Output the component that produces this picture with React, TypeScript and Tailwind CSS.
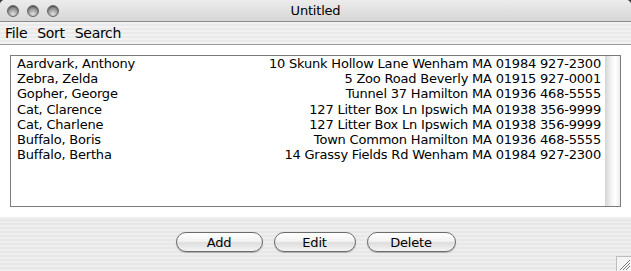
import React from 'react';

const rows = [
  ['Aardvark, Anthony', '10 Skunk Hollow Lane Wenham MA 01984 927-2300'],
  ['Zebra, Zelda', '5 Zoo Road Beverly MA 01915 927-0001'],
  ['Gopher, George', 'Tunnel 37 Hamilton MA 01936 468-5555'],
  ['Cat, Clarence', '127 Litter Box Ln Ipswich MA 01938 356-9999'],
  ['Cat, Charlene', '127 Litter Box Ln Ipswich MA 01938 356-9999'],
  ['Buffalo, Boris', 'Town Common Hamilton MA 01936 468-5555'],
  ['Buffalo, Bertha', '14 Grassy Fields Rd Wenham MA 01984 927-2300'],
];

function Light() {
  return (
    <span className="w-[12px] h-[12px] rounded-full border border-[#666666] bg-[radial-gradient(circle_at_50%_80%,#e2e2e2_0%,#a2a2a2_45%,#606060_100%)] shadow-[inset_0_1px_1px_rgba(0,0,0,0.35)]" />
  );
}

function AquaButton({ label, width }: { label: string; width: string }) {
  return (
    <button
      className={`${width} h-[20px] rounded-full border border-[#6b6b6b] bg-[linear-gradient(#ffffff_0%,#f3f3f3_45%,#dedede_55%,#f4f4f4_100%)] shadow-[0_1px_1px_rgba(0,0,0,0.25)] text-[13px] leading-none tracking-[-0.2px] text-black`}
    >
      {label}
    </button>
  );
}

export default function App() {
  return (
    <div className="w-[631px] h-[271px] bg-[#3a3a3a] font-['DejaVu_Sans',sans-serif] overflow-hidden">
      <div className="flex flex-col h-full rounded-t-[5px] overflow-hidden bg-white">
        {/* title bar */}
        <div className="relative h-[22px] flex items-center border-b border-[#8c8c8c] bg-[linear-gradient(#ececec,#d6d6d6)]">
          <div className="flex gap-[8px] pl-[7px]">
            <Light />
            <Light />
            <Light />
          </div>
          <div className="absolute inset-0 flex items-center justify-center text-[13px] tracking-[-0.2px] text-black">
            Untitled
          </div>
        </div>

        {/* menu bar */}
        <div className="h-[23px] flex items-center gap-[10px] pl-[5px] border-b border-[#9a9a9a] text-[14px] tracking-[-0.3px] text-black bg-[repeating-linear-gradient(#f2f2f2_0px,#f2f2f2_2px,#eaeaea_2px,#eaeaea_4px)]">
          <span>File</span>
          <span>Sort</span>
          <span>Search</span>
        </div>

        {/* content */}
        <div className="h-[172px] pt-[10px] px-[10px]">
          <div className="h-[152px] flex border border-[#7b7b7b] bg-white">
            <div className="flex-1 pl-[6px] pr-[4px] text-[13px] leading-[15.2px] tracking-[-0.2px] text-black">
              {rows.map(([name, addr]) => (
                <div key={name + addr} className="flex justify-between whitespace-nowrap">
                  <span>{name}</span>
                  <span>{addr}</span>
                </div>
              ))}
            </div>
            <div className="w-[15px] bg-[linear-gradient(90deg,#d4d4d4_0%,#f6f6f6_45%,#ffffff_70%,#ececec_100%)]" />
          </div>
        </div>

        {/* button bar */}
        <div className="relative flex-1 flex justify-center gap-[11px] pt-[15px] bg-[repeating-linear-gradient(#eeeeee_0px,#eeeeee_2px,#e7e7e7_2px,#e7e7e7_4px)]">
          <AquaButton label="Add" width="w-[87px]" />
          <AquaButton label="Edit" width="w-[82px]" />
          <AquaButton label="Delete" width="w-[89px]" />
          <svg className="absolute right-0 bottom-0" width="15" height="15" viewBox="0 0 15 15">
            <rect x="0.5" y="0.5" width="15" height="15" fill="#f4f4f4" stroke="#bdbdbd" />
            <path d="M4 14 L14 4 M7 14 L14 7 M10 14 L14 10" stroke="#7a7a7a" strokeWidth="1" />
            <path d="M5 14 L14 5 M8 14 L14 8 M11 14 L14 11" stroke="#ffffff" strokeWidth="1" />
          </svg>
        </div>
      </div>
    </div>
  );
}
